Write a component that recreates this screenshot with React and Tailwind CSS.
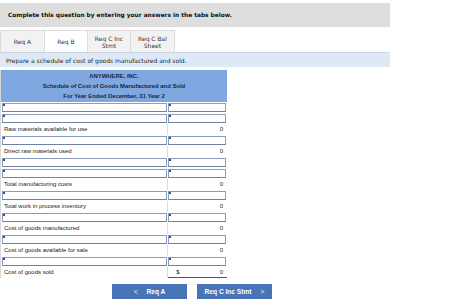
import React from "react";

const rows = [
  { type: "input" },
  { type: "input" },
  { type: "label", text: "Raw materials available for use" },
  { type: "input" },
  { type: "label", text: "Direct raw materials used" },
  { type: "input" },
  { type: "input" },
  { type: "label", text: "Total manufacturing costs" },
  { type: "input" },
  { type: "label", text: "Total work in process inventory" },
  { type: "input" },
  { type: "label", text: "Cost of goods manufactured" },
  { type: "input" },
  { type: "label", text: "Cost of goods available for sale" },
  { type: "input" },
  { type: "label", text: "Cost of goods sold", dollar: true },
];

const tabs = [
  { label: ["Req A"] },
  { label: ["Req B"], active: true },
  { label: ["Req C Inc", "Stmt"] },
  { label: ["Req C Bal", "Sheet"] },
];

function InputBox() {
  return (
    <div className="relative h-full border border-[#8a9cbd] border-b-[#6f82a6] bg-white">
      <span className="absolute left-0 top-0 w-[1.5px] h-[2px] bg-[#2f4f8f]" />
    </div>
  );
}

export default function App() {
  return (
    <div className="w-[474px] h-[302px] bg-white overflow-hidden font-['DejaVu_Sans',sans-serif]">
      {/* Instruction header */}
      <div className="mt-[3px] w-[390px] h-[24px] bg-[#dedede] flex items-center pl-[8px]">
        <span className="text-[5.85px] font-bold text-[#111]">
          Complete this question by entering your answers in the tabs below.
        </span>
      </div>

      {/* Tabs */}
      <div className="mt-[3px] flex h-[22px] w-[390px]">
        {tabs.map((t, i) => (
          <div
            key={i}
            className={`flex flex-col items-center justify-center border-r border-t border-[#dcdcdc] text-[6px] leading-[7px] text-[#333] ${
              i === 0 ? "w-[45px] border-l" : i === 1 ? "w-[43px]" : i === 2 ? "w-[43px]" : "w-[44px]"
            } ${t.active ? "bg-white" : "bg-[#f2f2f2]"}`}
          >
            {t.label.map((l) => (
              <span key={l}>{l}</span>
            ))}
          </div>
        ))}
      </div>

      {/* Prompt bar */}
      <div className="w-[390px] h-[15px] bg-[#dde9f7] border-t border-[#c9d3de] flex items-center pl-[6px]">
        <span className="text-[6px] text-[#222]">
          Prepare a schedule of cost of goods manufactured and sold.
        </span>
      </div>

      {/* Schedule table */}
      <div className="mt-[3px] w-[227px] border-l border-[#d8d8d8] font-['Liberation_Sans',Arial,sans-serif]">
        <div className="h-[32px] bg-[#80a8e0] flex flex-col items-center justify-center gap-[1px] text-[5.9px] leading-[9px] font-bold text-[#15243f]">
          <span>ANYWHERE, INC.</span>
          <span>Schedule of Cost of Goods Manufactured and Sold</span>
          <span>For Year Ended December, 31 Year 2</span>
        </div>
        {rows.map((r, i) =>
          r.type === "input" ? (
            <div key={i} className="flex h-[11px] py-[1px] bg-white">
              <div className="w-[168px] px-[1px]">
                <InputBox />
              </div>
              <div className="w-[59px] pr-[1px]">
                <InputBox />
              </div>
            </div>
          ) : (
            <div key={i} className="flex h-[11px] bg-white text-[6px] text-[#222]">
              <div className="w-[168px] flex items-center pl-[3px] border-r border-[#dddddd]">
                {r.text}
              </div>
              <div
                className={`w-[59px] flex items-center justify-between pr-[4px] ${
                  r.dollar ? "border-b border-[#555] pl-[8px]" : ""
                }`}
              >
                <span>{r.dollar ? "$" : ""}</span>
                <span>0</span>
              </div>
            </div>
          )
        )}
      </div>

      {/* Navigation buttons */}
      <div className="mt-[6px] ml-[112px] flex gap-[10px] font-['Liberation_Sans',Arial,sans-serif]">
        <button className="w-[75px] h-[15px] bg-[#4874b8] text-white text-[6.6px] font-bold flex items-center justify-center gap-[9px]">
          <span className="font-normal">&lt;</span>
          <span>Req A</span>
        </button>
        <button className="w-[75px] h-[15px] bg-[#4874b8] text-white text-[6.6px] font-bold flex items-center justify-center gap-[9px]">
          <span>Req C Inc Stmt</span>
          <span className="font-normal">&gt;</span>
        </button>
      </div>
    </div>
  );
}
